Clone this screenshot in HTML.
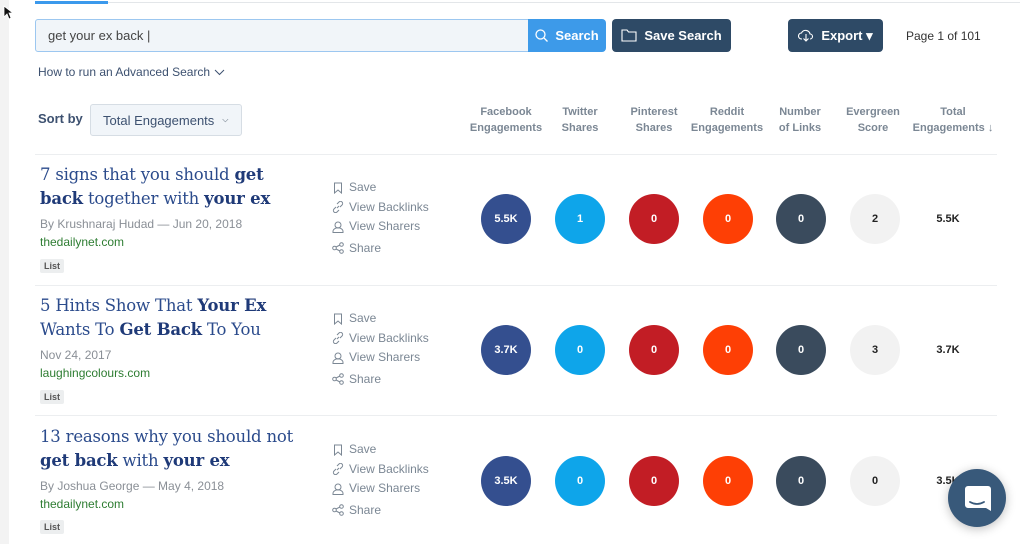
<!DOCTYPE html>
<html><head><meta charset="utf-8"><style>
*{margin:0;padding:0;box-sizing:border-box}
body{width:1024px;height:544px;overflow:hidden;background:#fff;font-family:"Liberation Sans",sans-serif;position:relative;color:#333}
.a{position:absolute}
.btn{position:absolute;border-radius:4px;color:#fff;font-size:13px;font-weight:bold;display:flex;align-items:center;justify-content:center;gap:7px}
.hd{position:absolute;top:104px;font-size:11px;font-weight:bold;color:#7b8794;text-align:center;line-height:16px;transform:translateX(-50%);white-space:nowrap}
.title{position:absolute;left:40px;font-family:"DejaVu Serif","Liberation Serif",serif;font-size:16.5px;color:#2b4b8c;line-height:24px;letter-spacing:-0.2px}
.title b{color:#1f3a78}
.by{position:absolute;left:40px;font-size:12px;color:#8a8f96}
.dom{position:absolute;left:40px;font-size:12px;color:#2e7d32}
.tag{position:absolute;left:40px;font-size:9px;font-weight:bold;color:#555;background:#eceeef;border-radius:2px;padding:2px 4px}
.act{position:absolute;left:332px;font-size:12px;color:#7b8794;line-height:19.5px}
.act div{display:flex;align-items:center;gap:5px}
.act svg{width:12px;height:12px}
.c{position:absolute;width:50px;height:50px;border-radius:50%;color:#fff;font-size:11px;font-weight:bold;display:flex;align-items:center;justify-content:center;transform:translate(-50%,-50%)}
.tot{position:absolute;font-size:11px;font-weight:bold;color:#222;transform:translate(-50%,-50%)}
.sep{position:absolute;left:35px;width:962px;height:1px;background:#eceef0}
</style></head><body>
<div class="a" style="left:0;top:0;width:9px;height:544px;background:#f3f3f3"></div>
<div class="a" style="left:108px;top:2px;width:912px;height:1px;background:#e3e6e9"></div>
<div class="a" style="left:35px;top:1px;width:73px;height:3px;background:#3b99ec"></div>
<svg class="a" style="left:3px;top:5px" width="10" height="15" viewBox="0 0 10 15"><path d="M1 1v11l3-3 2 5 2-1-2-5h4z" fill="#111" stroke="#fff" stroke-width="0.8"/></svg>
<div class="a" style="left:35px;top:19px;width:494px;height:33px;background:#f1f5f9;border:1px solid #9cc7f0;border-radius:3px 0 0 3px;font-size:13px;color:#444;padding:8px 12px">get your ex back |</div>
<div class="btn" style="left:528px;top:19px;width:78px;height:33px;background:#3d9ae9;border-radius:0 4px 4px 0"><svg width="13" height="13" viewBox="0 0 13 13" fill="none" stroke="#fff" stroke-width="1.3"><circle cx="5.5" cy="5.5" r="4.5"/><path d="M9 9l3.5 3.5"/></svg>Search</div>
<div class="btn" style="left:612px;top:19px;width:119px;height:33px;background:#2e4a66"><svg width="16" height="13" viewBox="0 0 16 13" fill="none" stroke="#fff" stroke-width="1.1"><path d="M1 1h5l1.5 2H15v9H1z"/></svg>Save Search</div>
<div class="btn" style="left:788px;top:19px;width:95px;height:33px;background:#2e4a66"><svg width="16" height="13" viewBox="0 0 16 13" fill="none" stroke="#fff" stroke-width="1.1"><path d="M4 10H3.5a3 3 0 010-6 4.5 4.5 0 018.5 1 2.5 2.5 0 010 5H12M8 5v7M5.5 9.5L8 12l2.5-2.5"/></svg>Export &#9662;</div>
<div class="a" style="left:906px;top:29px;font-size:12px;color:#333">Page 1 of 101</div>
<div class="a" style="left:38px;top:65px;font-size:12px;color:#3d5170;display:flex;align-items:center;gap:4px">How to run an Advanced Search <svg width="11" height="7" viewBox="0 0 11 7" fill="none" stroke="#3d5170"><path d="M1 1l4.5 4.5L10 1"/></svg></div>
<div class="a" style="left:38px;top:111px;font-size:13px;font-weight:bold;color:#3d5170">Sort by</div>
<div class="a" style="left:90px;top:104px;width:152px;height:32px;background:#f1f5f9;border:1px solid #d6dde4;border-radius:3px;font-size:13px;color:#3d5170;padding:8px 12px;white-space:nowrap;display:flex;align-items:center;gap:8px">Total Engagements <svg width="12" height="7" viewBox="0 0 12 7" fill="none" stroke="#7b8794"><path d="M1 1l5 5 5-5"/></svg></div>
<div class="hd" style="left:506px">Facebook<br>Engagements</div>
<div class="hd" style="left:580px">Twitter<br>Shares</div>
<div class="hd" style="left:654px">Pinterest<br>Shares</div>
<div class="hd" style="left:727px">Reddit<br>Engagements</div>
<div class="hd" style="left:800px">Number<br>of Links</div>
<div class="hd" style="left:873px">Evergreen<br>Score</div>
<div class="hd" style="left:953px">Total<br>Engagements &darr;</div>

<div class="sep" style="top:154px"></div>
<div class="sep" style="top:285px"></div>
<div class="sep" style="top:415px"></div>

<div class="title" style="top:163px">7 signs that you should <b>get</b><br><b>back</b> together with <b>your ex</b></div>
<div class="by" style="top:217px">By Krushnaraj Hudad — Jun 20, 2018</div>
<div class="dom" style="top:235px">thedailynet.com</div>
<div class="tag" style="top:259px">List</div>

<div class="title" style="top:294px">5 Hints Show That <b>Your Ex</b><br>Wants To <b>Get Back</b> To You</div>
<div class="by" style="top:348px">Nov 24, 2017</div>
<div class="dom" style="top:366px">laughingcolours.com</div>
<div class="tag" style="top:390px">List</div>

<div class="title" style="top:425px">13 reasons why you should not<br><b>get back</b> with <b>your ex</b></div>
<div class="by" style="top:479px">By Joshua George — May 4, 2018</div>
<div class="dom" style="top:497px">thedailynet.com</div>
<div class="tag" style="top:520px">List</div>

<div class="act" style="top:178px">
<div><svg viewBox="0 0 12 12" fill="none" stroke="#7b8794"><path d="M2.5 1h7v10L6 8l-3.5 3z"/></svg>Save</div>
<div><svg viewBox="0 0 12 12" fill="none" stroke="#7b8794"><path d="M5 7l2-2M4 6L2 8a2 2 0 003 3l2-2M8 6l2-2a2 2 0 00-3-3L5 3"/></svg>View Backlinks</div>
<div><svg viewBox="0 0 12 12" fill="none" stroke="#7b8794"><circle cx="6" cy="4" r="3"/><path d="M1 11.5v-1a4 3 0 0110 0v1z"/></svg>View Sharers</div>
<div style="margin-top:2px"><svg viewBox="0 0 12 12" fill="none" stroke="#7b8794"><circle cx="2.5" cy="6" r="1.8"/><circle cx="9.5" cy="2.5" r="1.8"/><circle cx="9.5" cy="9.5" r="1.8"/><path d="M4 5l4-2M4 7l4 2"/></svg>Share</div>
</div>
<div class="act" style="top:309px">
<div><svg viewBox="0 0 12 12" fill="none" stroke="#7b8794"><path d="M2.5 1h7v10L6 8l-3.5 3z"/></svg>Save</div>
<div><svg viewBox="0 0 12 12" fill="none" stroke="#7b8794"><path d="M5 7l2-2M4 6L2 8a2 2 0 003 3l2-2M8 6l2-2a2 2 0 00-3-3L5 3"/></svg>View Backlinks</div>
<div><svg viewBox="0 0 12 12" fill="none" stroke="#7b8794"><circle cx="6" cy="4" r="3"/><path d="M1 11.5v-1a4 3 0 0110 0v1z"/></svg>View Sharers</div>
<div style="margin-top:2px"><svg viewBox="0 0 12 12" fill="none" stroke="#7b8794"><circle cx="2.5" cy="6" r="1.8"/><circle cx="9.5" cy="2.5" r="1.8"/><circle cx="9.5" cy="9.5" r="1.8"/><path d="M4 5l4-2M4 7l4 2"/></svg>Share</div>
</div>
<div class="act" style="top:440px">
<div><svg viewBox="0 0 12 12" fill="none" stroke="#7b8794"><path d="M2.5 1h7v10L6 8l-3.5 3z"/></svg>Save</div>
<div><svg viewBox="0 0 12 12" fill="none" stroke="#7b8794"><path d="M5 7l2-2M4 6L2 8a2 2 0 003 3l2-2M8 6l2-2a2 2 0 00-3-3L5 3"/></svg>View Backlinks</div>
<div><svg viewBox="0 0 12 12" fill="none" stroke="#7b8794"><circle cx="6" cy="4" r="3"/><path d="M1 11.5v-1a4 3 0 0110 0v1z"/></svg>View Sharers</div>
<div style="margin-top:2px"><svg viewBox="0 0 12 12" fill="none" stroke="#7b8794"><circle cx="2.5" cy="6" r="1.8"/><circle cx="9.5" cy="2.5" r="1.8"/><circle cx="9.5" cy="9.5" r="1.8"/><path d="M4 5l4-2M4 7l4 2"/></svg>Share</div>
</div>

<div class="c" style="left:506px;top:219px;background:#344f8f">5.5K</div>
<div class="c" style="left:580px;top:219px;background:#0ea5ea">1</div>
<div class="c" style="left:654px;top:219px;background:#c21d25">0</div>
<div class="c" style="left:728px;top:219px;background:#fe3f05">0</div>
<div class="c" style="left:801px;top:219px;background:#3a4b5d">0</div>
<div class="c" style="left:875px;top:219px;background:#f2f2f2;color:#222">2</div>
<div class="tot" style="left:948px;top:219px">5.5K</div>

<div class="c" style="left:506px;top:350px;background:#344f8f">3.7K</div>
<div class="c" style="left:580px;top:350px;background:#0ea5ea">0</div>
<div class="c" style="left:654px;top:350px;background:#c21d25">0</div>
<div class="c" style="left:728px;top:350px;background:#fe3f05">0</div>
<div class="c" style="left:801px;top:350px;background:#3a4b5d">0</div>
<div class="c" style="left:875px;top:350px;background:#f2f2f2;color:#222">3</div>
<div class="tot" style="left:948px;top:350px">3.7K</div>

<div class="c" style="left:506px;top:481px;background:#344f8f">3.5K</div>
<div class="c" style="left:580px;top:481px;background:#0ea5ea">0</div>
<div class="c" style="left:654px;top:481px;background:#c21d25">0</div>
<div class="c" style="left:728px;top:481px;background:#fe3f05">0</div>
<div class="c" style="left:801px;top:481px;background:#3a4b5d">0</div>
<div class="c" style="left:875px;top:481px;background:#f2f2f2;color:#222">0</div>
<div class="tot" style="left:948px;top:481px">3.5K</div>

<div class="a" style="left:948px;top:469px;width:58px;height:58px;border-radius:50%;background:#38597a;box-shadow:0 2px 10px rgba(0,0,0,.25)">
<svg width="58" height="58" viewBox="0 0 58 58"><path d="M18 17h22a3 3 0 013 3v22l-5-3H20a3 3 0 01-3-3V20a3 3 0 013-3z" fill="#fff"/><path d="M22 33q7 4 14 0" stroke="#38597a" stroke-width="1.8" fill="none" stroke-linecap="round"/></svg>
</div>
</body></html>
